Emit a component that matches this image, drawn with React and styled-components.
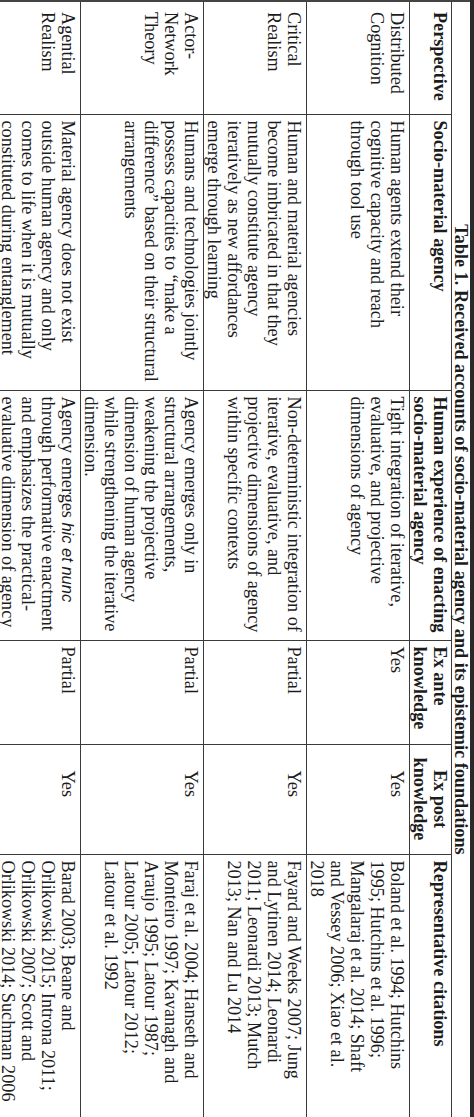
import React from "react";
import styled, { createGlobalStyle } from "styled-components";

const Global = createGlobalStyle`
  html, body {
    margin: 0;
    padding: 0;
    background: #ffffff;
  }
`;

const Page = styled.div`
  width: 474px;
  height: 1117px;
  overflow: hidden;
  background: #ffffff;
`;

// the scanned table lies on its side: draw it upright, then turn it clockwise
const Sheet = styled.div`
  width: 1117px;
  height: 474px;
  transform-origin: 0 0;
  transform: translateX(474px) rotate(90deg);
`;

const Table = styled.table`
  width: 1117px;
  table-layout: fixed;
  border-collapse: collapse;
  font-family: "Liberation Serif", "Times New Roman", serif;
  font-size: 18.2px;
  line-height: 20px;
  color: #1c1c1c;
  border-top: 4px solid #2a2a2a;
  border-left: 2px solid #444;
  border-right: 2px solid #444;
  border-bottom: 3px solid #2a2a2a;
`;

const Col = styled.col`
  width: ${(p) => p.$w}px;
`;

const Title = styled.th`
  height: 18px;
  padding: 0 40px 0 0;
  font-weight: bold;
  text-align: center;
  line-height: 18px;
  white-space: nowrap;
  border-bottom: 1px solid #3a3a3a;
`;

const Head = styled.th`
  height: 42px;
  padding: 1px ${(p) => (p.$first ? 10 : 6)}px 0;
  font-weight: bold;
  text-align: ${(p) => (p.$center ? "center" : "left")};
  vertical-align: top;
  white-space: nowrap;
  border: 1px solid #3a3a3a;
  box-sizing: border-box;
`;

const Cell = styled.td`
  height: ${(p) => p.$h}px;
  padding: 2px ${(p) => (p.$first ? 10 : 4)}px 0 ${(p) => p.$indent ?? (p.$first ? 10 : 6)}px;
  vertical-align: top;
  border: 1px solid #3a3a3a;
  box-sizing: border-box;
`;

const Line = styled.div`
  white-space: nowrap;
`;

const Latin = styled.em`
  font-family: "Liberation Sans", Arial, sans-serif;
  font-size: 16.5px;
  font-style: italic;
`;

const rows = [
  {
    h: 102,
    perspective: ["Distributed", "Cognition"],
    agency: [
      "Human agents extend their",
      "cognitive capacity and reach",
      "through tool use",
    ],
    experience: [
      "Tight integration of iterative,",
      "evaluative, and projective",
      "dimensions of agency",
    ],
    exAnte: "Yes",
    exPost: "Yes",
    cites: [
      "Boland et al. 1994; Hutchins",
      "1995; Hutchins et al. 1996;",
      "Mangalaraj et al. 2014; Shaft",
      "and Vessey 2006; Xiao et al.",
      "2018",
    ],
  },
  {
    h: 102,
    perspective: ["Critical", "Realism"],
    agency: [
      "Human and material agencies",
      "become imbricated in that they",
      "mutually constitute agency",
      "iteratively as new affordances",
      "emerge through learning",
    ],
    experience: [
      "Non-deterministic integration of",
      "iterative, evaluative, and",
      "projective dimensions of agency",
      "within specific contexts",
    ],
    exAnte: "Partial",
    exPost: "Yes",
    cites: [
      "Fayard and Weeks 2007; Jung",
      "and Lytinen 2014; Leonardi",
      "2011; Leonardi 2013; Mutch",
      "2013; Nan and Lu 2014",
    ],
  },
  {
    h: 122,
    perspective: ["Actor-", "Network", "Theory"],
    agency: [
      "Humans and technologies jointly",
      "possess capacities to \u201cmake a",
      "difference\u201d based on their structural",
      "arrangements",
    ],
    experience: [
      "Agency emerges only in",
      "structural arrangements,",
      "weakening the projective",
      "dimension of human agency",
      "while strengthening the iterative",
      "dimension.",
    ],
    exAnte: "Partial",
    exPost: "Yes",
    cites: [
      "Faraj et al. 2004; Hanseth and",
      "Monteiro 1997; Kavanagh and",
      "Araujo 1995; Latour 1987;",
      "Latour 2005; Latour 2012;",
      "Latour et al. 1992",
    ],
  },
  {
    h: 86,
    perspective: ["Agential", "Realism"],
    agency: [
      "Material agency does not exist",
      "outside human agency and only",
      "comes to life when it is mutually",
      "constituted during entanglement",
    ],
    experience: [
      <>
        Agency emerges <Latin>hic et nunc</Latin>
      </>,
      "through performative enactment",
      "and emphasizes the practical-",
      "evaluative dimension of agency",
    ],
    exAnte: "Partial",
    exPost: "Yes",
    cites: [
      "Barad 2003; Beane and",
      "Orlikowski 2015; Introna 2011;",
      "Orlikowski 2007; Scott and",
      "Orlikowski 2014; Suchman 2006",
    ],
  },
];

const Lines = ({ items }) =>
  items.map((t, i) => <Line key={i}>{t}</Line>);

export default function App() {
  return (
    <Page>
      <Global />
      <Sheet>
        <Table>
          <colgroup>
            <Col $w={113} />
            <Col $w={276} />
            <Col $w={250} />
            <Col $w={104} />
            <Col $w={110} />
            <Col $w={264} />
          </colgroup>
          <thead>
            <tr>
              <Title colSpan={6}>
                Table 1. Received accounts of socio-material agency and its
                epistemic foundations
              </Title>
            </tr>
            <tr>
              <Head $first>Perspective</Head>
              <Head>Socio-material agency</Head>
              <Head>
                Human experience of enacting
                <br />
                socio-material agency
              </Head>
              <Head>
                Ex ante
                <br />
                knowledge
              </Head>
              <Head $center>
                Ex post
                <br />
                knowledge
              </Head>
              <Head>Representative citations</Head>
            </tr>
          </thead>
          <tbody>
            {rows.map((r) => (
              <tr key={r.perspective.join(" ")}>
                <Cell $h={r.h} $first>
                  <Lines items={r.perspective} />
                </Cell>
                <Cell $h={r.h}>
                  <Lines items={r.agency} />
                </Cell>
                <Cell $h={r.h}>
                  <Lines items={r.experience} />
                </Cell>
                <Cell $h={r.h}>{r.exAnte}</Cell>
                <Cell $h={r.h} $indent={26}>
                  {r.exPost}
                </Cell>
                <Cell $h={r.h}>
                  <Lines items={r.cites} />
                </Cell>
              </tr>
            ))}
          </tbody>
        </Table>
      </Sheet>
    </Page>
  );
}
